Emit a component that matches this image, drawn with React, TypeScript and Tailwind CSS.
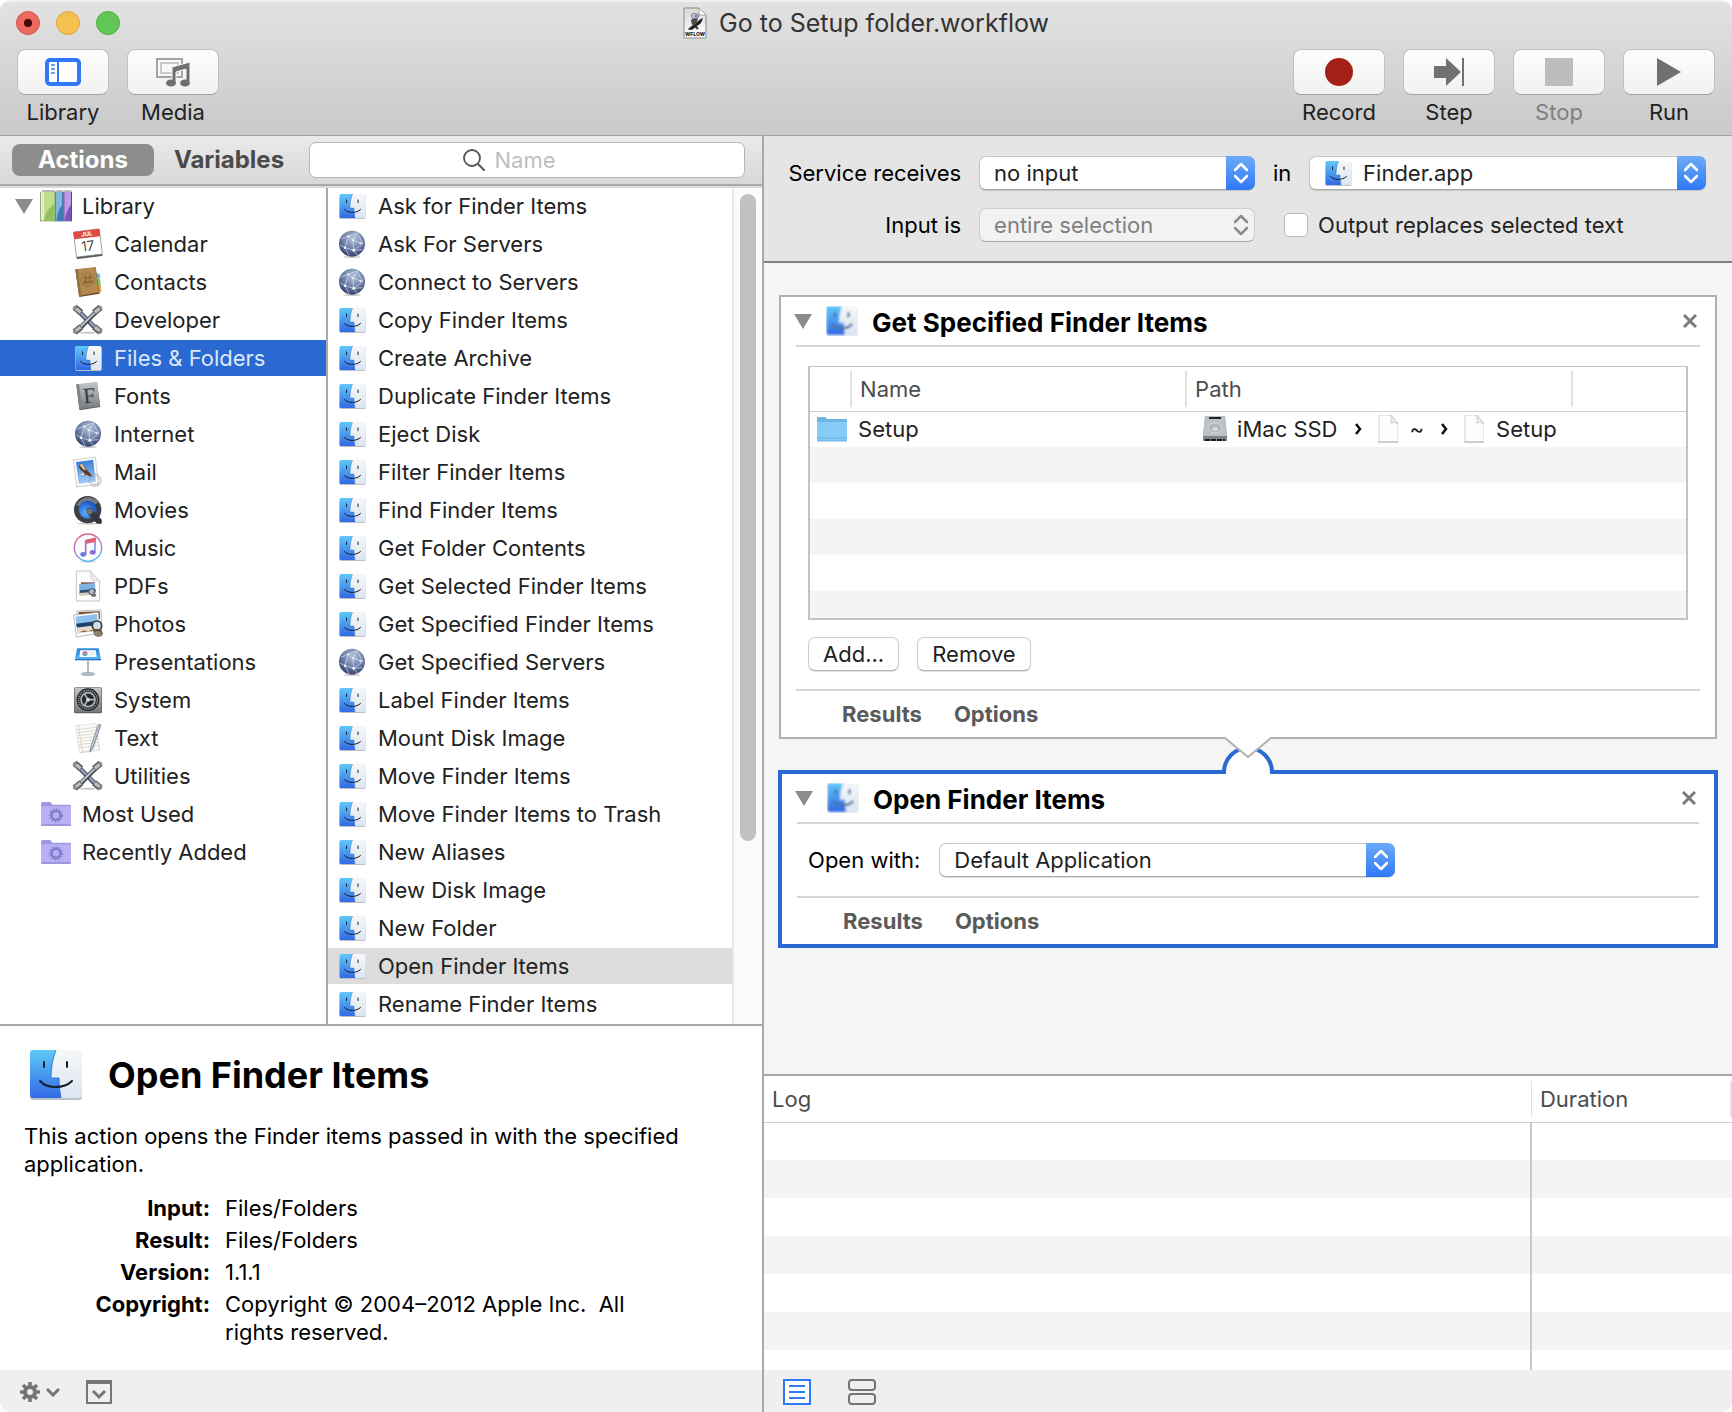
import type { ReactNode } from "react"
import clsx from "clsx"

/* ---------- shared gradients ---------- */

function Gradients() {
  return (
    <svg className="absolute w-0 h-0" aria-hidden="true">
      <defs>
        <linearGradient id="finder-blue" x1="0" y1="0" x2="0" y2="1">
          <stop offset="0" stopColor="#5fc9f8" />
          <stop offset="0.45" stopColor="#4a9ff0" />
          <stop offset="1" stopColor="#3369e6" />
        </linearGradient>
        <linearGradient id="finder-white" x1="0" y1="0" x2="0" y2="1">
          <stop offset="0" stopColor="#f7f7f8" />
          <stop offset="1" stopColor="#dbe5f2" />
        </linearGradient>
        <radialGradient id="globe" cx="0.55" cy="0.3" r="0.75">
          <stop offset="0" stopColor="#b4c3dc" />
          <stop offset="0.55" stopColor="#6b7ea8" />
          <stop offset="1" stopColor="#2a3560" />
        </radialGradient>
        <linearGradient id="steel" x1="0" y1="0" x2="0" y2="1">
          <stop offset="0" stopColor="#c3c6cb" />
          <stop offset="1" stopColor="#777b81" />
        </linearGradient>
        <linearGradient id="paper" x1="0" y1="0" x2="0" y2="1">
          <stop offset="0" stopColor="#d9d9d9" />
          <stop offset="1" stopColor="#ffffff" />
        </linearGradient>
        <linearGradient id="music-ring" x1="0" y1="0" x2="0.3" y2="1">
          <stop offset="0" stopColor="#e8625f" />
          <stop offset="0.55" stopColor="#b673d6" />
          <stop offset="1" stopColor="#58b4f0" />
        </linearGradient>
        <radialGradient id="quicktime" cx="0.4" cy="0.65" r="0.6">
          <stop offset="0" stopColor="#5fb4ff" />
          <stop offset="1" stopColor="#1d56c4" />
        </radialGradient>
        <linearGradient id="sky" x1="0" y1="0" x2="0" y2="1">
          <stop offset="0" stopColor="#3c7fd8" />
          <stop offset="1" stopColor="#a5cdf4" />
        </linearGradient>
        <linearGradient id="keynote" x1="0" y1="0" x2="0" y2="1">
          <stop offset="0" stopColor="#2f86d8" />
          <stop offset="1" stopColor="#4fb3f5" />
        </linearGradient>
        <filter id="soften" x="-10%" y="-10%" width="120%" height="120%">
          <feGaussianBlur stdDeviation="1.5" />
        </filter>
      </defs>
    </svg>
  )
}

/* ---------- icons ---------- */

function FinderIcon({ className, soft }: { className: string; soft?: boolean }) {
  const ink = soft ? "#4f6f9f" : "#17202c"
  const w = soft ? 4 : 2
  return (
    <svg viewBox="0 0 54 50" className={clsx("shrink-0", className)} aria-hidden="true">
      <rect x="1" y="2" width="52" height="48" rx="3" fill={soft ? "#e3e6ea" : "#b9c0c9"} />
      <g filter={soft ? "url(#soften)" : undefined}>
        <rect x="1" y="0" width="52" height="48" rx="3" fill="url(#finder-white)" />
        <path
          d="M4 0H27C24 8 22 17 22 28H30C30 35 31 42 32 48H4Q1 48 1 45V3Q1 0 4 0Z"
          fill="url(#finder-blue)"
        />
        <path d="M27 0C24 8 22 17 22 28H30C30 35 31 42 32 48" fill="none" stroke="#2b64c4" strokeWidth={soft ? 0 : 0.8} />
        <path d="M15 12V17M38 12V17" stroke={ink} strokeWidth={w} strokeLinecap="round" />
        <path d="M11 31C18 39 35 39 43 31" fill="none" stroke={ink} strokeWidth={w} strokeLinecap="round" />
      </g>
    </svg>
  )
}

function Globe() {
  return (
    <>
      <ellipse cx="45" cy="84" rx="26" ry="3" fill="#ccc" />
      <circle cx="45" cy="44" r="39" fill="url(#globe)" />
      <g fill="none" stroke="#dfe8f5" strokeWidth="2.2" opacity="0.85">
        <path d="M12 30L34 22L60 12M34 22L24 56L50 64L78 44L60 12M50 64L48 34L34 22M48 34L78 44M24 56L8 48M24 56L36 80M50 64L60 78M50 64L76 62M48 34L60 12" />
      </g>
      <g fill="#fff">
        <circle cx="34" cy="22" r="3" />
        <circle cx="24" cy="56" r="3.5" />
        <circle cx="50" cy="64" r="4" />
        <circle cx="48" cy="34" r="2.5" />
        <circle cx="70" cy="42" r="3" />
      </g>
    </>
  )
}

function Wrenches() {
  return (
    <>
      <ellipse cx="44" cy="83" rx="24" ry="3" fill="#c4c4c4" />
      <path d="M12 14L74 76" stroke="#4b4d6b" strokeWidth="14" />
      <path d="M12 13L74 75" stroke="#a9acc4" strokeWidth="6" />
      <path d="M76 14L14 76" stroke="#4b4d55" strokeWidth="14" />
      <path d="M75 13L13 75" stroke="#c2c4ca" strokeWidth="6" />
      <path d="M5 7L25 23M83 7L63 23M5 81L25 65M83 81L63 65" stroke="#5d6068" strokeWidth="19" />
      <path d="M5 8L23 22M83 8L65 22M5 80L23 66M83 80L65 66" stroke="#b9bcc2" strokeWidth="10" />
      <path d="M2 5L9 11M86 5L79 11M2 83L9 77M86 83L79 77" stroke="#85888f" strokeWidth="10" />
    </>
  )
}

const glyphs: Record<string, ReactNode> = {
  calendar: (
    <g transform="rotate(-7 45 45)">
      <rect x="6" y="6" width="78" height="80" rx="3" fill="#55585c" />
      <rect x="6" y="4" width="78" height="76" rx="3" fill="#fff" stroke="#8b8b8b" strokeWidth="2" />
      <path d="M6 4H84V26H6Z" fill="#dc4b43" />
      <text x="45" y="21" fontSize="18" fontWeight="700" textAnchor="middle" fill="#fff" fontFamily="Inter, sans-serif">JUL</text>
      <text x="44" y="66" fontSize="42" fontWeight="300" textAnchor="middle" fill="#222" fontFamily="Inter, sans-serif">17</text>
    </g>
  ),
  contacts: (
    <>
      <path d="M68 18L80 20L82 34L70 34Z" fill="#61b8e8" />
      <path d="M71 34L82 36L83 54L73 54Z" fill="#7cc66a" />
      <path d="M72 54L84 55L85 74L74 76Z" fill="#f0a044" />
      <path d="M8 8L68 1L80 80L19 90Z" fill="#6e4a22" />
      <path d="M7 7L67 1L78 76L18 86Z" fill="#b08850" />
      <path d="M7 7L14 6L25 85L18 86Z" fill="#94703f" />
      <circle cx="44" cy="38" r="20" fill="none" stroke="#9c7443" strokeWidth="3" />
      <circle cx="38" cy="32" r="6" fill="#8f6838" />
      <circle cx="51" cy="31" r="6" fill="#8f6838" />
      <path d="M30 50Q30 39 38 39Q45 39 45 50ZM45 49Q45 38 52 38Q59 38 60 48Z" fill="#8f6838" />
    </>
  ),
  wrenches: <Wrenches />,
  fonts: (
    <>
      <path d="M10 12L72 4L82 78L20 88Z" fill="#5e6265" />
      <path d="M10 10L72 2L81 76L19 85Z" fill="url(#steel)" />
      <path d="M10 10L18 9L27 84L19 85Z" fill="#7d8387" />
      <text x="49" y="66" fontSize="66" textAnchor="middle" fill="#35383b" transform="rotate(-6 49 45)" fontFamily="Liberation Serif, serif">F</text>
    </>
  ),
  globe: <Globe />,
  mail: (
    <>
      <g transform="rotate(-7 42 45)">
        <rect x="6" y="4" width="66" height="82" fill="#fdfdfd" stroke="#b5b8bb" strokeWidth="3" strokeDasharray="4 2" />
        <rect x="13" y="11" width="52" height="66" fill="url(#sky)" />
        <path d="M20 22L30 17L42 38L58 60L50 60L40 52L24 54L34 46L22 34Z" fill="#5a3d28" />
        <path d="M22 21L31 19L40 40L32 36Z" fill="#d8c7a9" />
        <path d="M18 50L34 47L32 54Z" fill="#f3efe6" />
      </g>
      <circle cx="66" cy="70" r="18" fill="none" stroke="#9aa4b3" strokeWidth="2.5" />
      <circle cx="66" cy="70" r="12" fill="none" stroke="#9aa4b3" strokeWidth="1.5" />
    </>
  ),
  movies: (
    <>
      <ellipse cx="45" cy="86" rx="34" ry="3" fill="#cfcfcf" />
      <circle cx="44" cy="44" r="41" fill="#3b3f46" />
      <path d="M10 30A41 41 0 0 1 78 22L62 30Q44 12 22 34Z" fill="#747b85" />
      <circle cx="44" cy="44" r="27" fill="url(#quicktime)" />
      <path d="M42 40L54 38L86 74V86H72L40 52Z" fill="#33373d" />
      <path d="M43 42L53 40L62 50L50 60L40 51Z" fill="#6d7580" />
    </>
  ),
  music: (
    <>
      <ellipse cx="45" cy="86" rx="26" ry="3" fill="#d8d8d8" />
      <circle cx="45" cy="44" r="41" fill="#fbfbfd" stroke="url(#music-ring)" strokeWidth="4" />
      <path d="M37 24L66 17V56" fill="none" stroke="url(#music-ring)" strokeWidth="5" />
      <path d="M37 20L68 14V27L37 33Z" fill="#df6376" />
      <path d="M38 24V62" stroke="#a06fd0" strokeWidth="5" />
      <ellipse cx="31" cy="64" rx="9" ry="7" fill="#6b79e0" />
      <ellipse cx="59" cy="58" rx="9" ry="7" fill="#8a72dc" />
    </>
  ),
  pdfs: (
    <>
      <path d="M10 0H52L80 30V90H10Z" fill="#fdfdfd" stroke="#b9b9b9" strokeWidth="2.5" />
      <path d="M52 0L80 30H60Q52 26 52 18Z" fill="#e9e9e9" stroke="#c9c9c9" strokeWidth="1.5" />
      <path d="M24 34H66V40H24Z" fill="#83583a" />
      <path d="M18 40L66 36L68 66L20 72Z" fill="#7fb4e2" />
      <path d="M20 58L67 54L68 66L20 70Z" fill="#2d4c72" />
      <path d="M20 66L68 62V71L20 75Z" fill="#dccfb9" />
      <circle cx="56" cy="62" r="9" fill="#b5bac0" stroke="#44484d" strokeWidth="3" />
      <ellipse cx="62" cy="73" rx="8" ry="5" fill="#6b6f74" />
    </>
  ),
  photos: (
    <>
      <path d="M12 6L84 3L86 60L14 64Z" fill="#fff" stroke="#9c9c9c" strokeWidth="2" />
      <path d="M17 9L80 7L81 30L18 30Z" fill="#7c4a2a" />
      <path d="M2 18L76 10L82 72L10 84Z" fill="#fff" stroke="#9c9c9c" strokeWidth="2" />
      <path d="M7 23L72 15L77 62L14 72Z" fill="#8fc1ee" />
      <path d="M9 44L74 36L76 48L12 56Z" fill="#20406e" />
      <path d="M12 56L76 48L77 64L14 74Z" fill="#e7d9c4" />
      <path d="M20 70L34 64L44 68L56 62L62 66Z" fill="#8b5b3b" />
      <circle cx="72" cy="50" r="14" fill="#d5dbe2" stroke="#34373b" strokeWidth="5" />
      <path d="M60 60L84 60L90 74Q84 86 70 82Q60 76 60 60Z" fill="#5a5149" />
      <ellipse cx="74" cy="74" rx="12" ry="8" fill="#8d8174" />
    </>
  ),
  presentations: (
    <>
      <path d="M12 4H77L84 36H6Z" fill="url(#keynote)" />
      <path d="M6 36H84V40H6Z" fill="#2872bf" />
      <path d="M22 10H68L71 30H19Z" fill="#fff" />
      <path d="M28 20A8 7 0 0 1 44 20Z" fill="#d65a9a" />
      <path d="M28 20A8 7 0 0 0 36 27V20Z" fill="#48a5e8" />
      <path d="M36 27A8 7 0 0 0 44 20H36Z" fill="#6cc15c" />
      <path d="M48 17H66M48 22H66" stroke="#ccd6e0" strokeWidth="2" />
      <path d="M45 40V78" stroke="#a3a9b0" strokeWidth="5" />
      <ellipse cx="45" cy="81" rx="20" ry="5" fill="#a9bccd" stroke="#8496a6" strokeWidth="1.5" />
    </>
  ),
  system: (
    <>
      <rect x="3" y="7" width="84" height="78" rx="5" fill="#5d6064" />
      <rect x="5" y="8" width="80" height="73" rx="4" fill="url(#steel)" />
      <circle cx="45" cy="44" r="34" fill="#26282a" />
      <circle cx="45" cy="44" r="28" fill="none" stroke="#b5b8bb" strokeWidth="4" strokeDasharray="3 3" />
      <circle cx="45" cy="44" r="21" fill="none" stroke="#b0b3b6" strokeWidth="5" />
      <path d="M45 44L34 26M45 44L66 44M45 44L34 62" stroke="#b0b3b6" strokeWidth="5" />
      <circle cx="45" cy="44" r="6" fill="#d5d7d9" />
    </>
  ),
  text: (
    <>
      <path d="M8 10L70 2L82 82L20 91Z" fill="#d4d4d4" />
      <path d="M7 8L69 1L80 80L19 88Z" fill="#fbfaf6" stroke="#d0d0cc" strokeWidth="1.5" />
      <path d="M16 7L28 87" stroke="#eebd9a" strokeWidth="2" />
      <path
        d="M10 20L70 13M11 29L71 22M12 38L73 31M14 47L74 40M15 56L75 49M16 65L76 58M17 74L78 67"
        stroke="#c9c9c5"
        strokeWidth="2"
      />
      <path d="M76 4L84 6L60 76L50 88L53 72Z" fill="#9aa5b3" stroke="#66707d" strokeWidth="1.5" />
      <path d="M79 6L56 74" stroke="#e2e8ee" strokeWidth="2" />
    </>
  ),
  smartFolder: (
    <>
      <path d="M0 14Q0 9 5 9H26Q30 9 32 14L34 17H86Q90 17 90 21V79H0Z" fill="#9f97e0" />
      <path d="M0 22H90V78Q90 80 87 80H3Q0 80 0 78Z" fill="#b7b0f5" />
      <path d="M0 76H90V78Q90 80 87 80H3Q0 80 0 78Z" fill="#958cd4" />
      <circle cx="45" cy="49" r="13" fill="none" stroke="#8177c8" strokeWidth="6" />
      <circle cx="45" cy="49" r="18" fill="none" stroke="#8177c8" strokeWidth="5" strokeDasharray="5 4" />
    </>
  ),
}

function Glyph({ name }: { name: string }) {
  return (
    <svg viewBox="0 0 90 90" className="w-[30px] h-[30px] shrink-0 overflow-visible" aria-hidden="true">
      {glyphs[name]}
    </svg>
  )
}

function BooksIcon() {
  return (
    <svg viewBox="0 0 96 96" className="w-8 h-8 shrink-0" aria-hidden="true">
      <path d="M4 4L10 0H42L46 4L52 0H66L70 4L76 0H90L96 4V8H4Z" fill="#b9b9b9" />
      <rect x="0" y="6" width="46" height="88" fill="#6f8f4e" />
      <rect x="2" y="6" width="12" height="86" fill="#e4ecc9" />
      <rect x="12" y="6" width="32" height="86" fill="#bfdd8e" />
      <path d="M44 40V92H12Q16 60 44 40Z" fill="#93c15e" />
      <rect x="46" y="6" width="24" height="88" fill="#345f92" />
      <rect x="48" y="6" width="19" height="86" fill="#82b7e2" />
      <path d="M67 44V92H50Q52 62 67 44Z" fill="#3f79b8" />
      <rect x="70" y="6" width="26" height="88" fill="#5d3f94" />
      <rect x="73" y="6" width="20" height="86" fill="#bd9ce2" />
      <path d="M93 44V92H75Q77 62 93 44Z" fill="#7d55c0" />
    </svg>
  )
}

function Disclosure() {
  return (
    <svg viewBox="0 0 18 15" className="w-[18px] h-[15px] shrink-0" aria-hidden="true">
      <path d="M0 0H18L9 15Z" fill="#8b8b8b" />
    </svg>
  )
}

function WorkflowDocIcon() {
  return (
    <svg viewBox="0 0 24 32" className="w-6 h-8 shrink-0" aria-hidden="true">
      <path d="M1 1H16L23 8V31H1Z" fill="url(#paper)" stroke="#8a8a8a" />
      <path d="M16 1V8H23Z" fill="#fff" stroke="#a5a5a5" />
      <path d="M6 22L19 12L17 16L9 22Z" fill="#1f1f1f" stroke="#1f1f1f" strokeWidth="1.5" strokeLinejoin="round" />
      <path d="M8 13Q12 9 15 12L13 17L9 18Z" fill="#4c4c4c" />
      <path d="M12 19L15 22" stroke="#333" strokeWidth="2" />
      <ellipse cx="12" cy="9" rx="4" ry="2.5" fill="#c8ccd2" stroke="#6a6a6a" strokeWidth="0.8" />
      <ellipse cx="13" cy="9" rx="1.5" ry="1" fill="#2f78d6" />
      <text x="12" y="29" fontSize="5" fontWeight="800" textAnchor="middle" fill="#222" fontFamily="Inter, sans-serif">WFLOW</text>
    </svg>
  )
}

function DocIcon() {
  return (
    <svg viewBox="0 0 20 28" className="w-5 h-7 shrink-0" aria-hidden="true">
      <path d="M1 0H13L20 8V27H1Z" fill="#fefefe" stroke="#d2d2d2" />
      <path d="M12 0Q15 6 12 8Q17 6 20 9Z" fill="#f1f1f1" stroke="#cfcfcf" />
      <path d="M0 27H20" stroke="#b5b5b5" />
    </svg>
  )
}

function DiskIcon() {
  return (
    <svg viewBox="0 0 24 26" className="w-6 h-[26px] shrink-0" aria-hidden="true">
      <path d="M2 0H22L24 20V25H0V20Z" fill="#8f959b" />
      <path d="M2 0H22L24 20H0Z" fill="#bcc2c7" />
      <path d="M6 2H18" stroke="#222" strokeWidth="2" />
      <ellipse cx="12" cy="12" rx="7" ry="5" fill="#b0b6bb" stroke="#d7dbde" />
      <ellipse cx="12" cy="13" rx="3" ry="2" fill="#d3d7da" />
      <path d="M0 20H24V25H0Z" fill="#7d8287" />
      <path d="M2 24H22" stroke="#1d1d1d" strokeWidth="2" strokeDasharray="5 1" />
    </svg>
  )
}

function FolderIcon() {
  return (
    <svg viewBox="0 0 30 26" className="w-[30px] h-[26px] shrink-0" aria-hidden="true">
      <path d="M0 2Q0 1 1 1H8Q9 1 10 3H29Q30 3 30 4V24H0Z" fill="#6fb4e2" />
      <path d="M0 6H30V24Q30 25 29 25H1Q0 25 0 24Z" fill="#87ccf6" />
      <path d="M0 22H30M0 25H30" stroke="#69ade0" />
    </svg>
  )
}

function PathArrow() {
  return (
    <svg viewBox="0 0 8 12" className="w-2 h-3 shrink-0" aria-hidden="true">
      <path d="M2 1L6 6L2 11" fill="none" stroke="#111" strokeWidth="2.5" />
    </svg>
  )
}

function Chevrons({ color }: { color: string }) {
  return (
    <svg viewBox="0 0 14 22" className="w-[14px] h-[22px]" aria-hidden="true">
      <path d="M1 8L7 2L13 8M1 14L7 20L13 14" fill="none" stroke={color} strokeWidth="2.5" strokeLinecap="round" strokeLinejoin="round" />
    </svg>
  )
}

/* ---------- controls ---------- */

type PopUpProps = {
  id: string
  value: string
  className?: string
  disabled?: boolean
  icon?: ReactNode
}

function PopUp({ id, value, className, disabled, icon }: PopUpProps) {
  return (
    <div className={clsx("relative", className)}>
      <select
        id={id}
        disabled={disabled}
        className={clsx(
          "block w-full h-[34px] appearance-none rounded-[7px] border border-b-[#a9a9a9] text-[22px] leading-7 pr-9",
          icon ? "pl-[53px]" : "pl-[14px]",
          disabled ? "bg-[#f2f2f2] border-[#cdcdcd] text-[#7f7f7f]" : "bg-white border-[#c6c6c6] text-[#222] shadow-[0_1px_1px_rgba(0,0,0,0.15)]",
        )}
      >
        <option>{value}</option>
      </select>
      {icon && <span className="absolute left-4 inset-y-0 flex items-center pointer-events-none">{icon}</span>}
      <span
        className={clsx(
          "absolute right-0 inset-y-0 w-[29px] flex items-center justify-center rounded-r-[7px] pointer-events-none",
          !disabled && "bg-linear-to-b from-[#6cabf8] to-[#2f78f6]",
        )}
      >
        <Chevrons color={disabled ? "#8b8b8b" : "#fff"} />
      </span>
    </div>
  )
}

function ToolButton({ label, disabled, children }: { label: string; disabled?: boolean; children: ReactNode }) {
  return (
    <button type="button" disabled={disabled} className="w-[92px] flex flex-col items-center gap-[3px]">
      <span className="w-full h-[46px] flex items-center justify-center rounded-lg border border-[#c2c2c2] border-b-[#a3a3a3] bg-linear-to-b from-[#fdfdfd] to-[#f1f1f1]">
        {children}
      </span>
      <span className={clsx("text-[22px] leading-7", disabled ? "text-[#808080]" : "text-[#222]")}>{label}</span>
    </button>
  )
}

function PushButton({ children }: { children: ReactNode }) {
  return (
    <button
      type="button"
      className="h-[34px] px-[14px] rounded-[7px] border border-[#cfcfcf] border-b-[#b0b0b0] bg-white text-[22px] leading-7 text-[#222] shadow-[0_1px_1px_rgba(0,0,0,0.12)]"
    >
      {children}
    </button>
  )
}

/* ---------- data ---------- */

const categories = [
  { label: "Calendar", icon: "calendar" },
  { label: "Contacts", icon: "contacts" },
  { label: "Developer", icon: "wrenches" },
  { label: "Files & Folders", icon: "finder" },
  { label: "Fonts", icon: "fonts" },
  { label: "Internet", icon: "globe" },
  { label: "Mail", icon: "mail" },
  { label: "Movies", icon: "movies" },
  { label: "Music", icon: "music" },
  { label: "PDFs", icon: "pdfs" },
  { label: "Photos", icon: "photos" },
  { label: "Presentations", icon: "presentations" },
  { label: "System", icon: "system" },
  { label: "Text", icon: "text" },
  { label: "Utilities", icon: "wrenches" },
]

const actions = [
  "Ask for Finder Items",
  "Ask For Servers",
  "Connect to Servers",
  "Copy Finder Items",
  "Create Archive",
  "Duplicate Finder Items",
  "Eject Disk",
  "Filter Finder Items",
  "Find Finder Items",
  "Get Folder Contents",
  "Get Selected Finder Items",
  "Get Specified Finder Items",
  "Get Specified Servers",
  "Label Finder Items",
  "Mount Disk Image",
  "Move Finder Items",
  "Move Finder Items to Trash",
  "New Aliases",
  "New Disk Image",
  "New Folder",
  "Open Finder Items",
  "Rename Finder Items",
]

const details = [
  ["Input:", "Files/Folders"],
  ["Result:", "Files/Folders"],
  ["Version:", "1.1.1"],
  ["Copyright:", "Copyright © 2004–2012 Apple Inc.  All rights reserved."],
]

const selectedCategory = "Files & Folders"
const selectedAction = "Open Finder Items"

/* ---------- sections ---------- */

function TitleBar() {
  return (
    <header className="rounded-t-[10px] border-t-2 border-t-[#f0f0f0] border-b border-b-[#a3a3a3] bg-linear-to-b from-[#e2e2e2] to-[#c9c9c9]">
      <div className="h-[42px] px-4 grid grid-cols-[1fr_auto_1fr] items-center">
        <div className="flex gap-4">
          <button type="button" aria-label="Close" className="w-6 h-6 rounded-full bg-[#ed6a5e] border border-[#d5544a] flex items-center justify-center">
            <span className="w-2 h-2 rounded-full bg-[#460804]" />
          </button>
          <button type="button" aria-label="Minimize" className="w-6 h-6 rounded-full bg-[#f5c04f] border border-[#dba63c]" />
          <button type="button" aria-label="Zoom" className="w-6 h-6 rounded-full bg-[#62c655] border border-[#4fab43]" />
        </div>
        <h1 className="flex items-center gap-3 text-[25px] leading-8 text-[#333]">
          <WorkflowDocIcon />
          Go to Setup folder.workflow
        </h1>
      </div>
      <div className="flex justify-between px-[17px] pt-[5px] pb-[9px]">
        <div className="flex gap-[18px]">
          <ToolButton label="Library">
            <svg viewBox="0 0 36 28" className="w-9 h-7" aria-hidden="true">
              <rect x="2" y="2" width="32" height="24" rx="3" fill="#fff" stroke="#2f78f6" strokeWidth="4" />
              <path d="M13 2V26" stroke="#2f78f6" strokeWidth="2" />
              <path d="M6 7H10M6 11H10M6 15H10" stroke="#6ba2f7" strokeWidth="2" />
            </svg>
          </ToolButton>
          <ToolButton label="Media">
            <svg viewBox="0 0 36 30" className="w-9 h-[30px]" aria-hidden="true">
              <rect x="2" y="2" width="25" height="18" fill="none" stroke="#a3a3a3" strokeWidth="2" />
              <rect x="6" y="6" width="17" height="10" fill="none" stroke="#cacaca" strokeWidth="2" />
              <path d="M17 10L35 5V25H31V12L21 15V27H17Z" fill="#6f6f6f" stroke="#f8f8f8" strokeWidth="1" />
              <ellipse cx="16" cy="26" rx="5" ry="3.5" fill="#6f6f6f" />
              <ellipse cx="30" cy="26" rx="5" ry="3.5" fill="#6f6f6f" />
            </svg>
          </ToolButton>
        </div>
        <div className="flex gap-[18px]">
          <ToolButton label="Record">
            <span className="w-7 h-7 rounded-full bg-[#a32116]" />
          </ToolButton>
          <ToolButton label="Step">
            <svg viewBox="0 0 30 28" className="w-[30px] h-7" aria-hidden="true">
              <path d="M0 8H12V0L27 14L12 28V20H0Z" fill="#707070" />
              <path d="M29 0V28" stroke="#707070" strokeWidth="2" />
            </svg>
          </ToolButton>
          <ToolButton label="Stop" disabled>
            <span className="w-7 h-7 bg-[#bdbdbd]" />
          </ToolButton>
          <ToolButton label="Run">
            <svg viewBox="0 0 24 28" className="w-6 h-7" aria-hidden="true">
              <path d="M0 0L24 14L0 28Z" fill="#707070" />
            </svg>
          </ToolButton>
        </div>
      </div>
    </header>
  )
}

function LibraryBar() {
  return (
    <div className="h-[50px] flex items-center pl-3 pr-[17px] border-b-2 border-[#a9a9a9] bg-linear-to-b from-[#eaeaea] to-[#d8d8d8]">
      <button type="button" className="w-[142px] h-8 rounded-lg bg-[#8d8d8d] text-[24px] leading-8 font-bold text-white">
        Actions
      </button>
      <button type="button" className="w-[150px] mr-[5px] text-[24px] leading-8 font-bold text-[#4a4a4a]">
        Variables
      </button>
      <label className="flex-1 h-9 flex items-center justify-center gap-[10px] pr-9 rounded-[7px] border border-[#b5b5b5] bg-white">
        <svg viewBox="0 0 22 22" className="w-[22px] h-[22px]" aria-hidden="true">
          <circle cx="9" cy="9" r="8" fill="none" stroke="#555" strokeWidth="1.8" />
          <path d="M15 15L21 21" stroke="#555" strokeWidth="2" strokeLinecap="round" />
        </svg>
        <input
          type="text"
          aria-label="Search actions"
          placeholder="Name"
          className="field-sizing-content bg-transparent text-[22px] leading-7 outline-none placeholder:text-[#bfbfbf]"
        />
      </label>
    </div>
  )
}

function CategoryList() {
  return (
    <ul className="basis-[326px] shrink-0 flex flex-col gap-[2px] text-[#222]">
      <li>
        <button type="button" className="w-full h-9 flex items-center pl-[15px]">
          <Disclosure />
          <span className="flex items-center gap-[10px] pl-[7px]">
            <BooksIcon />
            Library
          </span>
        </button>
      </li>
      {categories.map((c) => (
        <li key={c.label}>
          <button
            type="button"
            className={clsx(
              "w-full h-9 flex items-center gap-[11px] pl-[73px]",
              c.label === selectedCategory && "bg-[#2b69d2] text-[#dce7f9]",
            )}
          >
            {c.icon === "finder" ? (
              <span className="w-[30px] flex justify-center">
                <FinderIcon className="w-[27px] h-[25px]" />
              </span>
            ) : (
              <Glyph name={c.icon} />
            )}
            {c.label}
          </button>
        </li>
      ))}
      {["Most Used", "Recently Added"].map((label) => (
        <li key={label}>
          <button type="button" className="w-full h-9 flex items-center gap-[11px] pl-[41px]">
            <Glyph name="smartFolder" />
            {label}
          </button>
        </li>
      ))}
    </ul>
  )
}

function ActionList() {
  return (
    <div className="flex-1 flex border-l-2 border-[#a9a9a9]">
      <ul className="flex-1 flex flex-col gap-[2px] pb-[2px] text-[#222]">
        {actions.map((label) => (
          <li key={label}>
            <button
              type="button"
              className={clsx("w-full h-9 flex items-center gap-3 pl-[10px]", label === selectedAction && "bg-[#dcdcdc]")}
            >
              <span className="w-7 flex justify-center">
                {label.includes("Servers") ? <Glyph name="globe" /> : <FinderIcon className="w-[27px] h-[25px]" />}
              </span>
              {label}
            </button>
          </li>
        ))}
      </ul>
      <div className="w-[30px] pt-[6px] pl-[6px] border-l-2 border-[#e8e8e8] bg-[#fafafa]">
        <div className="w-4 h-[78%] rounded-full bg-[#c1c1c1]" />
      </div>
    </div>
  )
}

function ActionInfo() {
  return (
    <section className="flex-1 border-t-2 border-[#a9a9a9] pt-5 pl-6 pr-9 text-black">
      <div className="flex items-center gap-[25px] pl-[5px]">
        <FinderIcon className="w-[54px] h-[50px]" />
        <h2 className="text-[36px] leading-[58px] font-bold">Open Finder Items</h2>
      </div>
      <p className="mt-[18px] text-[22px] leading-7">This action opens the Finder items passed in with the specified application.</p>
      <dl className="mt-4 grid grid-cols-[186px_1fr] gap-x-[15px] gap-y-1 text-[22px] leading-7">
        {details.map(([term, value]) => (
          <div key={term} className="contents">
            <dt className="text-right font-bold">{term}</dt>
            <dd className="whitespace-pre-wrap pr-10">{value}</dd>
          </div>
        ))}
      </dl>
    </section>
  )
}

function LibraryPane() {
  return (
    <div className="flex flex-col min-w-0">
      <LibraryBar />
      <div className="flex border-t-2 border-[#dadada] text-[22px] leading-7">
        <CategoryList />
        <ActionList />
      </div>
      <ActionInfo />
      <footer className="h-[42px] flex items-center gap-[26px] pt-[2px] pl-5 bg-[#efefef]">
        <button type="button" aria-label="Action menu" className="flex items-center gap-[6px]">
          <svg viewBox="0 0 20 20" className="w-5 h-5" aria-hidden="true">
            <circle cx="10" cy="10" r="5" fill="none" stroke="#757575" strokeWidth="4" />
            <path d="M10 0V4M10 16V20M0 10H4M16 10H20M3 3L6 6M14 14L17 17M3 17L6 14M14 6L17 3" stroke="#757575" strokeWidth="3.6" />
          </svg>
          <svg viewBox="0 0 14 10" className="w-[14px] h-[10px]" aria-hidden="true">
            <path d="M1 2L7 8L13 2" fill="none" stroke="#757575" strokeWidth="3" />
          </svg>
        </button>
        <button type="button" aria-label="Hide description">
          <svg viewBox="0 0 26 24" className="w-[26px] h-6" aria-hidden="true">
            <rect x="1" y="1" width="24" height="22" fill="none" stroke="#757575" strokeWidth="2" />
            <path d="M0 2H26" stroke="#757575" strokeWidth="4" />
            <path d="M7 11L13 17L19 11" fill="none" stroke="#757575" strokeWidth="3" />
          </svg>
        </button>
      </footer>
    </div>
  )
}

function ServiceBar() {
  return (
    <div className="flex flex-col gap-[18px] pt-5 pb-[19px] pr-[26px] border-b-2 border-[#808080] bg-[#e5e5e5] text-[22px] leading-7 text-black">
      <div className="flex items-center">
        <label htmlFor="receives" className="w-[197px] text-right">Service receives</label>
        <PopUp id="receives" value="no input" className="w-[276px] ml-[18px]" />
        <label htmlFor="scope" className="w-[54px] text-center">in</label>
        <PopUp id="scope" value="Finder.app" className="flex-1" icon={<FinderIcon className="w-[27px] h-[25px]" />} />
      </div>
      <div className="flex items-center">
        <label htmlFor="selection" className="w-[197px] text-right">Input is</label>
        <PopUp id="selection" value="entire selection" className="w-[276px] ml-[18px]" disabled />
        <input
          id="replaces"
          type="checkbox"
          className="appearance-none w-6 h-6 ml-[29px] mr-[10px] rounded-[5px] border border-[#b9b9b9] bg-white"
        />
        <label htmlFor="replaces" className="text-[#222]">Output replaces selected text</label>
      </div>
    </div>
  )
}

function StepHeader({ title }: { title: string }) {
  return (
    <div className="h-[50px] mx-[15px] flex items-center border-b-2 border-[#d6d6d6]">
      <button type="button" aria-label="Collapse" className="-ml-[2px]">
        <Disclosure />
      </button>
      <FinderIcon soft className="w-8 h-[30px] ml-[14px]" />
      <h3 className="flex-1 pt-1 pl-[14px] text-[26px] leading-8 font-bold text-black">{title}</h3>
      <button type="button" aria-label="Remove action" className="mr-[3px]">
        <svg viewBox="0 0 14 14" className="w-[14px] h-[14px]" aria-hidden="true">
          <path d="M1 1L13 13M13 1L1 13" stroke="#7b7b7b" strokeWidth="3" />
        </svg>
      </button>
    </div>
  )
}

function StepFooter() {
  return (
    <div className="h-[48px] mx-[15px] pl-[46px] flex items-center gap-8 border-t-2 border-[#d6d6d6] text-[22px] leading-7 font-bold text-[#5a5a5a]">
      <button type="button">Results</button>
      <button type="button">Options</button>
    </div>
  )
}

function HeadCell({ children, first }: { children?: ReactNode; first?: boolean }) {
  return (
    <th className="p-0 font-normal text-left">
      <div className={clsx("h-9 flex items-center pl-2", !first && "border-l-2 border-[#e2e2e2]")}>{children}</div>
    </th>
  )
}

function FinderItemsTable() {
  return (
    <div className="border-2 border-t border-[#c3c3c3] bg-white text-[22px] leading-7">
      <table className="w-full table-fixed border-collapse">
        <colgroup>
          <col className="w-10" />
          <col className="w-[335px]" />
          <col className="w-[386px]" />
          <col />
        </colgroup>
        <thead>
          <tr className="h-[44px] border-b border-[#cfcfcf] text-[#4c4c4c]">
            <HeadCell first />
            <HeadCell>Name</HeadCell>
            <HeadCell>Path</HeadCell>
            <HeadCell />
          </tr>
        </thead>
        <tbody className="text-[#222]">
          <tr className="h-9">
            <td className="p-0 pl-[7px]">
              <FolderIcon />
            </td>
            <td className="p-0 pl-2">Setup</td>
            <td className="p-0 pl-[18px]">
              <span className="flex items-center whitespace-nowrap">
                <DiskIcon />
                <span className="pl-[10px] pr-4">iMac SSD</span>
                <PathArrow />
                <span className="flex items-center gap-3 pl-4 pr-4">
                  <DocIcon />~
                </span>
                <PathArrow />
                <span className="flex items-center gap-3 pl-4">
                  <DocIcon />
                  Setup
                </span>
              </span>
            </td>
            <td />
          </tr>
          <tr className="h-9 bg-[#f4f4f4]"><td colSpan={4} /></tr>
          <tr className="h-9"><td colSpan={4} /></tr>
          <tr className="h-9 bg-[#f4f4f4]"><td colSpan={4} /></tr>
          <tr className="h-9"><td colSpan={4} /></tr>
          <tr className="h-[27px] bg-[#f4f4f4]"><td colSpan={4} /></tr>
        </tbody>
      </table>
    </div>
  )
}

function WorkflowCanvas() {
  return (
    <div className="flex-1 pt-8 px-[14px] pb-20 bg-[#f5f5f5]">
      <article className="mx-px border-2 border-[#b0b0b0] bg-white">
        <StepHeader title="Get Specified Finder Items" />
        <div className="pt-[19px] pb-[18px] px-[27px]">
          <FinderItemsTable />
          <div className="flex gap-[18px] pt-[17px]">
            <PushButton>Add...</PushButton>
            <PushButton>Remove</PushButton>
          </div>
        </div>
        <StepFooter />
      </article>
      <article className="relative mt-[31px] border-4 border-[#2b69d2] bg-white">
        {/* connector between the two steps */}
        <svg viewBox="0 0 54 42" className="absolute -top-[37px] left-1/2 -ml-[27px] w-[54px] h-[42px]" aria-hidden="true">
          <path d="M4 42V36A23 23 0 0 1 50 36V42Z" fill="#fff" />
          <path d="M3 37V35A24 24 0 0 1 51 35V37" fill="none" stroke="#2b69d2" strokeWidth="4" />
          <path d="M4 0H50V2L27 21L4 2Z" fill="#fff" />
          <path d="M2 1L4 1L27 20L50 1L52 1" fill="none" stroke="#b0b0b0" strokeWidth="2" />
        </svg>
        <StepHeader title="Open Finder Items" />
        <div className="flex items-center px-[26px] py-[19px] text-[22px] leading-7">
          <label htmlFor="open-with">Open with:</label>
          <PopUp id="open-with" value="Default Application" className="w-[456px] ml-[19px]" />
        </div>
        <StepFooter />
      </article>
    </div>
  )
}

function LogTable() {
  return (
    <div className="border-t-2 border-[#a9a9a9] bg-white text-[22px] leading-7">
      <table className="w-full table-fixed border-collapse">
        <colgroup>
          <col />
          <col className="w-[201px]" />
        </colgroup>
        <thead>
          <tr className="h-[46px] border-b border-[#cfcfcf] text-[#4c4c4c]">
            <th className="p-0 pl-2 font-normal text-left">Log</th>
            <th className="p-0 font-normal text-left">
              <div className="h-9 flex items-center pl-2 border-l border-r-2 border-[#e2e2e2]">Duration</div>
            </th>
          </tr>
        </thead>
        <tbody>
          {[0, 1, 2, 3, 4, 5, 6].map((i) => (
            <tr key={i} className={clsx(i === 6 ? "h-5" : "h-[38px]", i % 2 === 1 && "bg-[#f4f4f4]")}>
              <td />
              <td className="border-l-2 border-[#cacaca]" />
            </tr>
          ))}
        </tbody>
      </table>
    </div>
  )
}

function WorkflowPane() {
  return (
    <div className="flex flex-col min-w-0 border-l-2 border-[#a9a9a9]">
      <ServiceBar />
      <WorkflowCanvas />
      <LogTable />
      <footer className="h-[42px] flex items-center gap-[37px] pt-[2px] pl-[19px] bg-[#efefef]">
        <button type="button" aria-label="Log">
          <svg viewBox="0 0 28 26" className="w-7 h-[26px]" aria-hidden="true">
            <rect x="1" y="1" width="26" height="24" fill="#fff" stroke="#2f78f6" strokeWidth="2" />
            <path d="M6 7H22M6 13H22M6 19H22" stroke="#2f78f6" strokeWidth="2" />
          </svg>
        </button>
        <button type="button" aria-label="Variables">
          <svg viewBox="0 0 28 26" className="w-7 h-[26px]" aria-hidden="true">
            <rect x="1" y="1" width="26" height="10" rx="3" fill="none" stroke="#757575" strokeWidth="2" />
            <rect x="1" y="15" width="26" height="10" rx="3" fill="none" stroke="#757575" strokeWidth="2" />
          </svg>
        </button>
      </footer>
    </div>
  )
}

export default function App() {
  return (
    <div className="min-h-screen flex flex-col bg-white font-['Inter',sans-serif]">
      <Gradients />
      <TitleBar />
      <main className="flex-1 grid grid-cols-[44fr_56fr] rounded-b-[10px] overflow-hidden">
        <LibraryPane />
        <WorkflowPane />
      </main>
    </div>
  )
}
